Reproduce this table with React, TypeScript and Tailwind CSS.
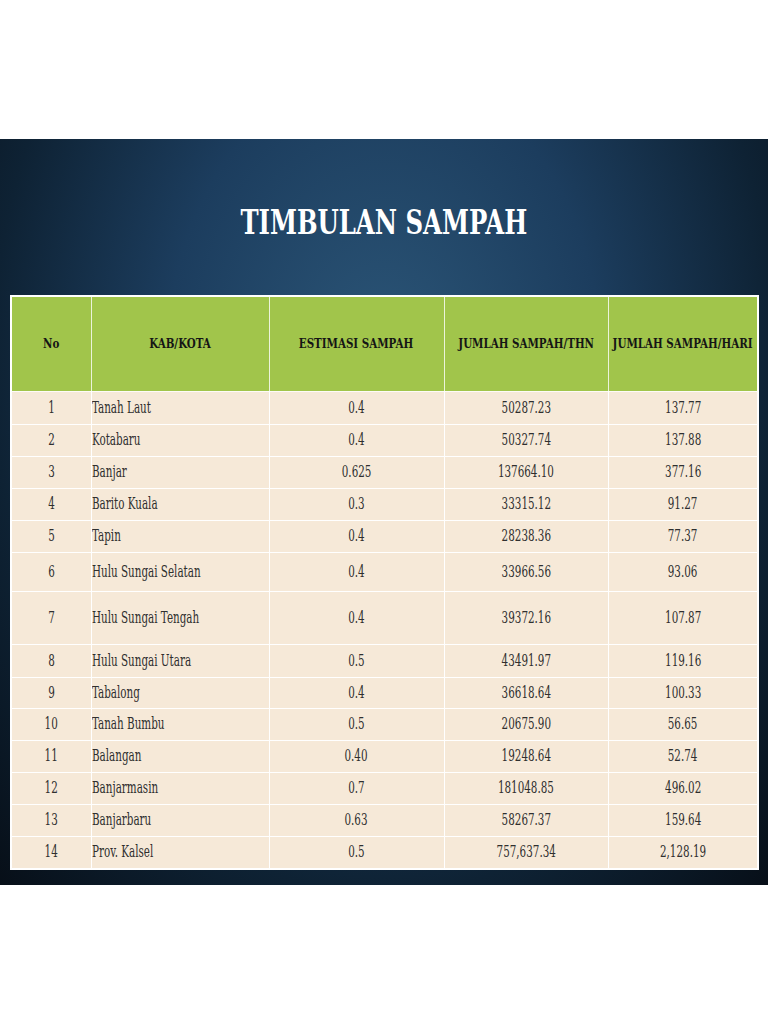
const rows = [
  { no: '1', kab: 'Tanah Laut', est: '0.4', thn: '50287.23', hari: '137.77', h: 'h-[33px]' },
  { no: '2', kab: 'Kotabaru', est: '0.4', thn: '50327.74', hari: '137.88', h: 'h-[32px]' },
  { no: '3', kab: 'Banjar', est: '0.625', thn: '137664.10', hari: '377.16', h: 'h-[32px]' },
  { no: '4', kab: 'Barito Kuala', est: '0.3', thn: '33315.12', hari: '91.27', h: 'h-[32px]' },
  { no: '5', kab: 'Tapin', est: '0.4', thn: '28238.36', hari: '77.37', h: 'h-[32px]' },
  { no: '6', kab: 'Hulu Sungai Selatan', est: '0.4', thn: '33966.56', hari: '93.06', h: 'h-[39px]' },
  { no: '7', kab: 'Hulu Sungai Tengah', est: '0.4', thn: '39372.16', hari: '107.87', h: 'h-[53px]' },
  { no: '8', kab: 'Hulu Sungai Utara', est: '0.5', thn: '43491.97', hari: '119.16', h: 'h-[33px]' },
  { no: '9', kab: 'Tabalong', est: '0.4', thn: '36618.64', hari: '100.33', h: 'h-[31px]' },
  { no: '10', kab: 'Tanah Bumbu', est: '0.5', thn: '20675.90', hari: '56.65', h: 'h-[32px]' },
  { no: '11', kab: 'Balangan', est: '0.40', thn: '19248.64', hari: '52.74', h: 'h-[32px]' },
  { no: '12', kab: 'Banjarmasin', est: '0.7', thn: '181048.85', hari: '496.02', h: 'h-[32px]' },
  { no: '13', kab: 'Banjarbaru', est: '0.63', thn: '58267.37', hari: '159.64', h: 'h-[32px]' },
  { no: '14', kab: 'Prov. Kalsel', est: '0.5', thn: '757,637.34', hari: '2,128.19', h: 'h-[33px]' },
];

const heads = ['No', 'KAB/KOTA', 'ESTIMASI SAMPAH', 'JUMLAH SAMPAH/THN', 'JUMLAH SAMPAH/HARI'];

const slab = "font-['DejaVu_Serif_Condensed','DejaVu_Serif',serif] font-stretch-condensed";

function Txt({ children, left }: { children: React.ReactNode; left?: boolean }) {
  return (
    <span className={`inline-block whitespace-nowrap scale-x-[0.72] ${left ? 'origin-left' : 'origin-center'}`}>
      {children}
    </span>
  );
}

export default function App() {
  return (
    <div className="h-[1024px] w-[768px] bg-white flex items-center">
      <div className="w-full h-[746px] bg-[radial-gradient(ellipse_at_50%_30%,#2b5577_0%,#1c3d5e_40%,#0e2234_72%,#070f18_100%)] flex flex-col">
        <h1 className={`${slab} mt-[67px] h-[89px] text-center text-white text-[33px] font-bold leading-none`}>
          <span className="inline-block whitespace-nowrap scale-x-[0.82]">TIMBULAN SAMPAH</span>
        </h1>
        <table className={`${slab} mx-[10px] w-[747px] table-fixed border-collapse border-2 border-white`}>
          <colgroup>
            <col className="w-[80px]" />
            <col className="w-[178px]" />
            <col className="w-[175px]" />
            <col className="w-[164px]" />
            <col className="w-[150px]" />
          </colgroup>
          <thead>
            <tr className="h-[95px] bg-[#a1c54b]">
              {heads.map((h) => (
                <th key={h} className="border border-white/80 p-0 align-middle text-[13px] font-bold text-[#151515]">
                  <div className="flex justify-center">
                    <span className="shrink-0 whitespace-nowrap scale-x-[0.88]">{h}</span>
                  </div>
                </th>
              ))}
            </tr>
          </thead>
          <tbody>
            {rows.map((r) => (
              <tr key={r.no} className={`${r.h} bg-[#f6e9d8] text-[16px] leading-none text-[#2f2f2f]`}>
                <td className="border border-white p-0 text-center"><Txt>{r.no}</Txt></td>
                <td className="border border-white p-0 text-left"><Txt left>{r.kab}</Txt></td>
                <td className="border border-white p-0 text-center"><Txt>{r.est}</Txt></td>
                <td className="border border-white p-0 text-center"><Txt>{r.thn}</Txt></td>
                <td className="border border-white p-0 text-center"><Txt>{r.hari}</Txt></td>
              </tr>
            ))}
          </tbody>
        </table>
      </div>
    </div>
  );
}
